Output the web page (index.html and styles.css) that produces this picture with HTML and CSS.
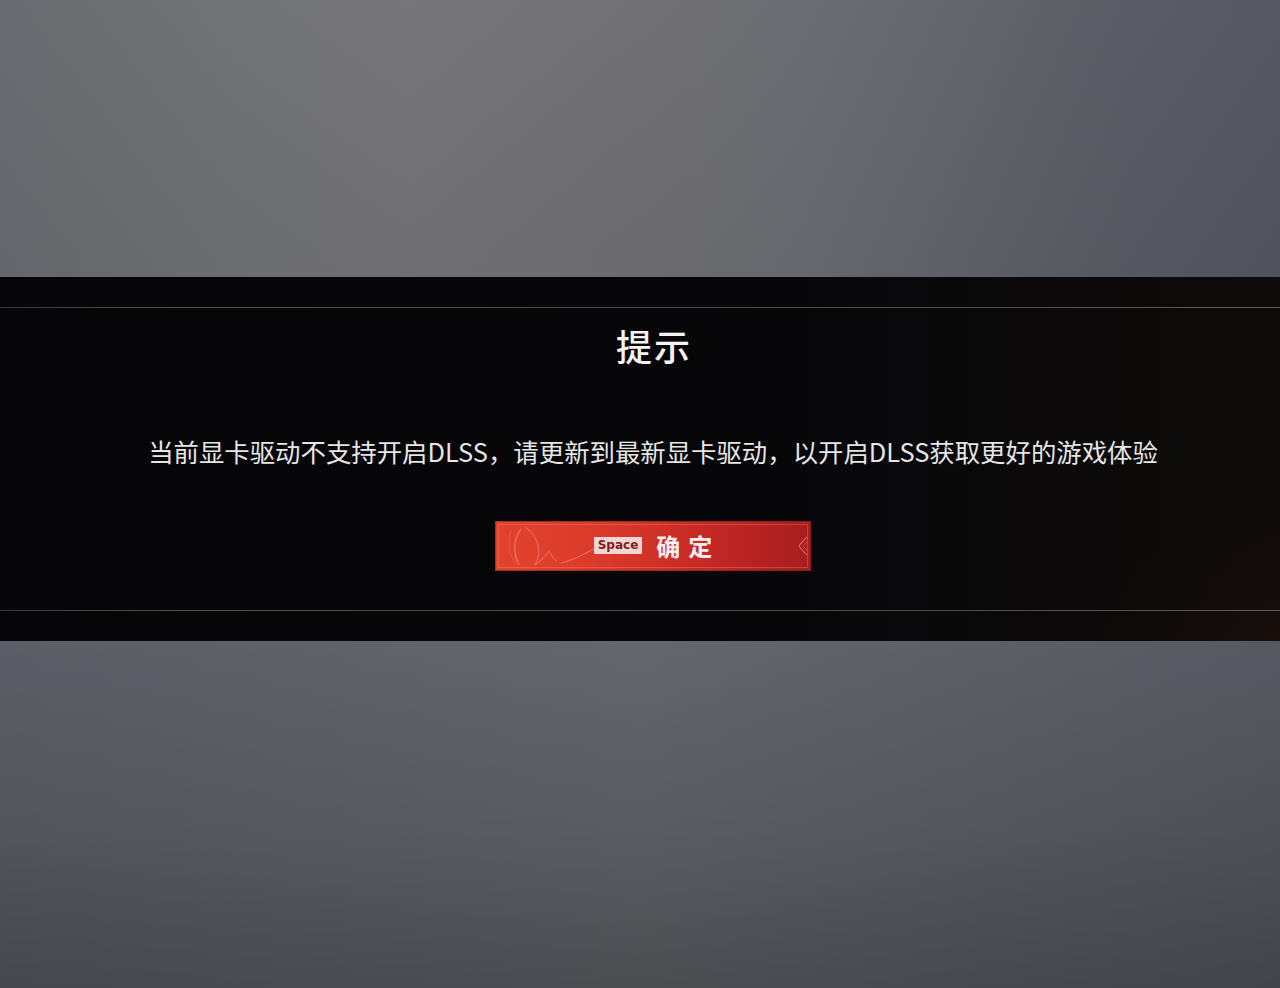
FILE: index.html
```html
<!DOCTYPE html>
<html lang="zh-CN">
<head>
<meta charset="utf-8">
<title>提示</title>
<link rel="stylesheet" href="styles.css">
</head>
<body>
<div class="screen">
  <div class="backdrop backdrop-top"></div>
  <section class="dialog">
    <div class="rule"></div>
    <div class="dialog-body">
      <h1 class="dialog-title">提示</h1>
      <p class="dialog-message">当前显卡驱动不支持开启DLSS，请更新到最新显卡驱动，以开启DLSS获取更好的游戏体验</p>
      <button class="confirm">
        <svg class="confirm-swirl" width="100" height="50" viewBox="0 0 100 50">
          <path d="M20 8 C12 18 12 32 18 44" fill="none" stroke="rgba(255,205,185,0.3)" stroke-width="1.6"/>
          <path d="M24 6 C36 14 42 30 34 44" fill="none" stroke="rgba(255,205,185,0.26)" stroke-width="1.4"/>
          <path d="M34 44 C40 40 44 36 48 30 C50 34 52 38 56 40" fill="none" stroke="rgba(255,205,185,0.28)" stroke-width="1.3"/>
          <path d="M60 42 C70 40 82 34 96 26" fill="none" stroke="rgba(255,205,185,0.34)" stroke-width="1.2"/>
          <path d="M10 10 C6 22 8 34 14 42" fill="none" stroke="rgba(255,205,185,0.16)" stroke-width="1"/>
        </svg>
        <svg class="confirm-notch" width="12" height="22" viewBox="0 0 12 22">
          <path d="M10 2 C6 6 3 9 2 11 C3 13 6 16 10 20" fill="none" stroke="rgba(255,190,170,0.45)" stroke-width="1.2"/>
          <path d="M10 7 C8 9 7 10 6 11 C7 12 8 13 10 15" fill="none" stroke="rgba(255,190,170,0.35)" stroke-width="1"/>
        </svg>
        <span class="keycap">Space</span>
        <span class="confirm-label">确定</span>
      </button>
    </div>
    <div class="rule"></div>
  </section>
  <div class="backdrop backdrop-bottom"></div>
</div>
</body>
</html>
```

FILE: styles.css
```css
html, body {
  margin: 0;
  padding: 0;
}

body {
  width: 1280px;
  height: 988px;
  overflow: hidden;
  font-family: "Noto Sans CJK SC", "Noto Sans", sans-serif;
  background: #55585f;
}

.screen {
  display: flex;
  flex-direction: column;
  height: 988px;
}

.backdrop {
  flex: none;
}

.backdrop-top {
  height: 277px;
  background:
    linear-gradient(180deg, rgba(255,255,255,0.02) 0%, rgba(0,0,0,0.03) 100%),
    linear-gradient(90deg, #68696e 0%, #6f7073 18%, #737375 32%, #6f6f73 48%, #6a6b70 62%, #5f6269 76%, #575a62 88%, #52555d 100%);
}

.backdrop-bottom {
  height: 347px;
  background:
    linear-gradient(180deg, rgba(0,0,0,0) 0%, rgba(0,0,0,0.1) 55%, rgba(0,0,0,0.24) 100%),
    linear-gradient(90deg, #5b5e66 0%, #60636a 30%, #63666b 50%, #5e6168 70%, #565961 100%);
}

.dialog {
  flex: none;
  height: 364px;
  box-sizing: border-box;
  padding: 30px 0;
  display: flex;
  flex-direction: column;
  background:
    radial-gradient(ellipse 240px 220px at 1300px 440px, rgba(60, 30, 20, 0.45), rgba(35, 18, 14, 0.2) 55%, rgba(0,0,0,0) 100%),
    linear-gradient(90deg, #060609 0%, #07070a 60%, #0b0909 85%, #0f0b0a 100%);
}

.rule {
  height: 1px;
  flex: none;
  background: linear-gradient(90deg, #3a3836 0%, #5a4f47 15%, #4a4642 50%, #5c5048 85%, #6a5a4c 100%);
}

.dialog-body {
  flex: 1;
  display: flex;
  flex-direction: column;
  align-items: center;
  padding-left: 26px;
}

.dialog-title {
  margin: 19px 0 0;
  font-size: 36px;
  line-height: 36px;
  font-weight: 500;
  color: #f4f4f4;
  letter-spacing: 2px;
  padding-left: 2px;
}

.dialog-message {
  margin: 75px 0 0;
  font-size: 25.4px;
  line-height: 26px;
  font-weight: 400;
  color: #e6e6e6;
  white-space: nowrap;
}

.confirm {
  position: relative;
  margin-top: 57px;
  width: 316px;
  height: 50px;
  padding: 0;
  border: none;
  display: flex;
  align-items: center;
  justify-content: center;
  gap: 14px;
  font-family: inherit;
  background: linear-gradient(90deg, #e2432d 0%, #dc3b2b 30%, #cd2f27 55%, #b92323 80%, #a81d1f 100%);
  box-shadow: inset 0 0 0 1px rgba(120, 20, 20, 0.5);
}

.confirm::after {
  content: "";
  position: absolute;
  inset: 3px;
  border: 1px solid rgba(255, 175, 150, 0.26);
  pointer-events: none;
}

.confirm-swirl {
  position: absolute;
  left: 6px;
  top: 0;
}

.confirm-notch {
  position: absolute;
  right: 2px;
  top: 14px;
}

.keycap {
  display: inline-block;
  height: 17px;
  line-height: 17px;
  padding: 0 4px;
  background: #f3d6d4;
  color: #7d1c1c;
  font-family: "DejaVu Sans", "Liberation Sans", sans-serif;
  font-size: 12px;
  font-weight: 700;
  border-radius: 1px;
  margin-top: -2px;
}

.confirm-label {
  font-size: 24px;
  line-height: 24px;
  font-weight: 700;
  color: #fbeeee;
  letter-spacing: 8px;
  margin-right: -8px;
}
```
